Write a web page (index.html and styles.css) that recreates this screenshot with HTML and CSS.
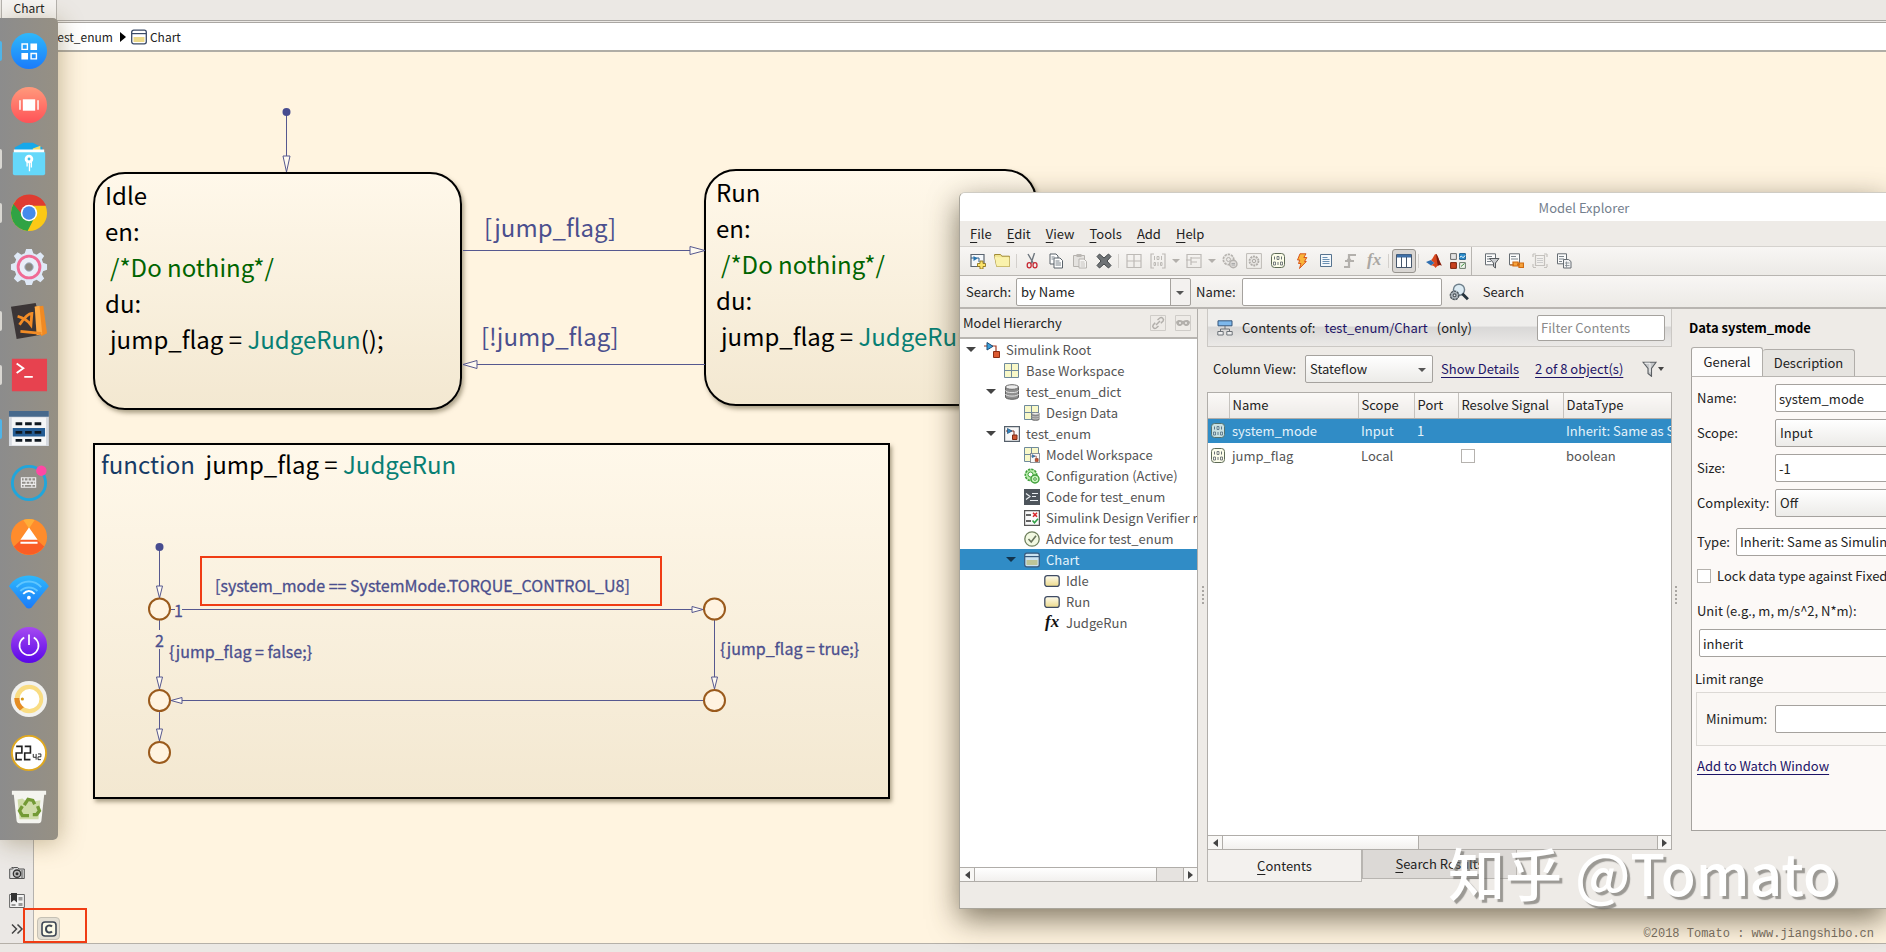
FILE: index.html
```html
<!DOCTYPE html>
<html lang="en">
<head>
  <meta charset="UTF-8" />
  <meta name="viewport" content="width=device-width, initial-scale=1.0" />
  <title>test_enum/Chart</title>
  <link rel="stylesheet" href="styles.css">
</head>
<body>

  <!-- shared icons -->
  <svg class="defs" width="0" height="0" aria-hidden="true">
    <defs>
      <linearGradient id="g-blue" x1="0" y1="0" x2="0" y2="1"><stop offset="0" stop-color="#2fb8fb"/><stop offset="1" stop-color="#1a7bfb"/></linearGradient>
      <linearGradient id="g-coral" x1="0" y1="0" x2="0" y2="1"><stop offset="0" stop-color="#ff9a7c"/><stop offset="1" stop-color="#ff5257"/></linearGradient>
      <linearGradient id="g-purple" x1="0" y1="0" x2="0" y2="1"><stop offset="0" stop-color="#a64af0"/><stop offset="1" stop-color="#5a06e8"/></linearGradient>
      <linearGradient id="g-yellow" x1="0" y1="0" x2="0" y2="1"><stop offset="0" stop-color="#fffdf0"/><stop offset="1" stop-color="#ecd98a"/></linearGradient>
      <symbol id="i-chart" viewBox="0 0 16 16"><rect x=".7" y="1.2" width="14.6" height="13.6" rx="2" fill="#fff" stroke="#3a4a66" stroke-width="1.3"/><path d="M1 4.6h14" stroke="#3a4a66" stroke-width="1.2"/><path d="M2.5 8h11v5h-11z" fill="#ecd98a"/></symbol>
      <symbol id="i-state" viewBox="0 0 16 16"><rect x=".8" y="2.6" width="14.4" height="10.8" rx="2.5" fill="url(#g-yellow)" stroke="#3f4b63" stroke-width="1.3"/></symbol>
      <symbol id="i-fx" viewBox="0 0 16 16"><text x="1" y="12" class="fx">fx</text></symbol>
      <symbol id="i-root" viewBox="0 0 16 16"><path d="M0 4h12v6" fill="none" stroke="#a33a22" stroke-width="1.2"/><path d="M3 .5v7.500l6-3.700z" fill="#3ba0dc" stroke="#1d4c74"/><path d="M9.500 9.500h6v6h-6z" fill="#dc5a31" stroke="#8a2d14"/></symbol>
      <symbol id="i-grid" viewBox="0 0 16 16"><path d="M.5.5h14v14H.5z" fill="#f8f8c8" stroke="#6f8a9c"/><path d="M7.500 1v14M1 7.500h14" stroke="#6f8a9c"/></symbol>
      <symbol id="i-db" viewBox="0 0 16 16"><path d="M1.500 3v10c0 3 13 3 13 0V3z" fill="#8f8f8f" stroke="#5f5f5f"/><ellipse cx="8" cy="3" rx="6.500" ry="2.300" fill="#ececec" stroke="#6a6a6a"/><path d="M1.500 6.500c0 2.800 13 2.800 13 0M1.500 10c0 2.800 13 2.800 13 0" fill="none" stroke="#e2e2e2"/></symbol>
      <symbol id="i-griddb" viewBox="0 0 16 16"><use href="#i-grid"/><svg x="7" y="7" width="9" height="9" viewBox="0 0 16 16"><use href="#i-db"/></svg></symbol>
      <symbol id="i-model" viewBox="0 0 16 16"><path d="M.6.6h14.800v14.800H.6z" fill="#f8f8f8" stroke="#56606b" stroke-width="1.200"/><path d="M2 5h8v4" fill="none" stroke="#803020"/><path d="M3.500 2.500v5l4.500-2.500z" fill="#2f86c4" stroke="#1d4c74" stroke-width=".7"/><path d="M8.500 9h4.500v4.500H8.500z" fill="#cf5530" stroke="#7c2b14"/></symbol>
      <symbol id="i-gridmodel" viewBox="0 0 16 16"><use href="#i-grid"/><svg x="6" y="6" width="10" height="10" viewBox="0 0 16 16"><use href="#i-model"/></svg></symbol>
      <symbol id="i-gears" viewBox="0 0 16 16"><circle cx="7" cy="7" r="5.700" fill="#b9ecaa" stroke="#3f9f3a" stroke-width="1.600" stroke-dasharray="2.400 .9"/><circle cx="6.500" cy="6.500" r="2.500" fill="#fff" stroke="#3f9f3a"/><circle cx="11" cy="11" r="4" fill="#c9f3bd" stroke="#3f9f3a" stroke-width="1.400"/><circle cx="11" cy="11" r="1.300" fill="#fff" stroke="#3f9f3a"/></symbol>
      <symbol id="i-code" viewBox="0 0 16 16"><path d="M0 0h16v16H0z" fill="#4d545b"/><path d="M2 4.500l4 3-4 3M8 4.500h6M8 7.500h4M6 11.500h8" stroke="#e9edf0" stroke-width="1.200" fill="none"/></symbol>
      <symbol id="i-verify" viewBox="0 0 16 16"><path d="M.6.6h14.800v14.800H.6z" fill="#fafafa" stroke="#555" stroke-width="1.200"/><path d="M2 5h5M2 11h5" stroke="#333" stroke-width="1.300"/><path d="M9 2.800l4 4M13 2.800l-4 4" stroke="#d8262b" stroke-width="1.600"/><path d="M8.500 10.500l2 2.300 3.500-4" fill="none" stroke="#2f9f43" stroke-width="1.600"/></symbol>
      <symbol id="i-advice" viewBox="0 0 16 16"><circle cx="8" cy="8" r="7.200" fill="#f2f9e2" stroke="#70805f" stroke-width="1.300"/><path d="M4.500 8l2.700 3L12 4.800" fill="none" stroke="#69745d" stroke-width="1.600"/></symbol>
      <symbol id="i-data" viewBox="0 0 16 16"><rect x="1.500" y=".5" width="13" height="14" rx="3" fill="#fcfdea" stroke="#5d6a55"/><path d="M4.500 3.500v3M11.500 3.500v3M8 9v3" stroke="#596069" stroke-width=".9"/><path d="M7 3.500h2v3H7zM3.500 9h2v3h-2zM10.500 9h2v3h-2z" fill="none" stroke="#596069" stroke-width=".8"/></symbol>
      <symbol id="i-new" viewBox="0 0 16 16"><path d="M1 1.500h13v12H1z" fill="#f5f8fb" stroke="#5b6570" stroke-width="1.200"/><path d="M1 5h8v4" fill="none" stroke="#2c5f8c"/><path d="M3.500 3v5l4-2.500z" fill="#2472ad"/><path d="M10 8h3v2.500h2.500v3H13V16h-3v-2.500H7.500v-3H10z" fill="#fbe36b" stroke="#8f7521" stroke-width=".9"/></symbol>
      <symbol id="i-folder" viewBox="0 0 16 16"><path d="M.6 3.200V1.500h6l1.200 1.700h7.600v10.300H2.700z" fill="#f2e592" stroke="#a18b35"/><path d="M.6 3.200l2.100 10.300h12.700V4.200H3.500z" fill="#faf2ac"/></symbol>
      <symbol id="i-cut" viewBox="0 0 16 16"><path d="M4 1l5.500 9.500M10.500 0L7 10.500" stroke="#6e767e" stroke-width="1.400"/><ellipse cx="5.200" cy="12.300" rx="2" ry="2.600" fill="none" stroke="#c72a34" stroke-width="1.300"/><ellipse cx="11" cy="12.300" rx="2" ry="2.600" fill="none" stroke="#c72a34" stroke-width="1.300"/></symbol>
      <symbol id="i-copy" viewBox="0 0 16 16"><path d="M2 1h6l2 2v8H2z" fill="#fff" stroke="#586169"/><path d="M6 5h6l2.500 2.500V15H6z" fill="#fff" stroke="#586169"/><path d="M3.500 4h3M3.500 6h2M7.500 8h4M7.500 10h5.500M7.500 12h5.500" stroke="#78828a"/></symbol>
      <symbol id="i-paste" viewBox="0 0 16 16"><path d="M1.500 2.500h11v11h-11z" fill="#e4e2df" stroke="#b5b2ae"/><path d="M4.500 1h5v3h-5z" fill="#bab7b3"/><path d="M7 6h5l2.500 2.500V15H7z" fill="#f6f5f3" stroke="#b5b2ae"/><path d="M8.500 9h4M8.500 11h4.500M8.500 13h4.500" stroke="#c4c1bd"/></symbol>
      <symbol id="i-delete" viewBox="0 0 16 16"><path d="M1 3.500L3.500 1 8 5l4.500-4L15 3.500 11 8l4 4.500-2.500 2.500L8 11l-4.500 4L1 12.500 5 8z" fill="#6f7376" stroke="#44484b"/></symbol>
      <symbol id="i-ggrid" viewBox="0 0 16 16"><path d="M1 1.500h14v13H1zM8 1.500v13M1 8h14" fill="none" stroke="#bdbab6" stroke-width="1.200"/></symbol>
      <symbol id="i-gdata" viewBox="0 0 16 16"><path d="M4 1H1v14h3M12 1h3v14h-3" fill="none" stroke="#bdbab6" stroke-width="1.200"/><path d="M4.500 3v4M11.500 3v4M8 9v4M7 3.500h2v3H7zM4 9.500h1.500v3H4zM10.500 9.500H12v3h-1.500z" fill="none" stroke="#bdbab6"/></symbol>
      <symbol id="i-gport" viewBox="0 0 16 16"><path d="M1 1.500h14v13H1zM0 7h5M5 4v8M5 5h9M5 9h6" fill="none" stroke="#bdbab6" stroke-width="1.200"/></symbol>
      <symbol id="i-gcogs" viewBox="0 0 16 16"><circle cx="6.500" cy="6.500" r="5.200" fill="#eae8e5" stroke="#b5b2ae" stroke-width="1.700" stroke-dasharray="2.400 .9"/><circle cx="6.500" cy="6.500" r="2" fill="none" stroke="#b5b2ae"/><circle cx="11.300" cy="11" r="3.700" fill="#dedbd8" stroke="#b5b2ae" stroke-width="1.400"/><path d="M9.500 10.500h3.500M9.500 12h3.500" stroke="#aaa"/></symbol>
      <symbol id="i-gcog" viewBox="0 0 16 16"><path d="M.6.6h14.800v14.800H.6z" fill="none" stroke="#bdbab6"/><circle cx="8" cy="8" r="4.500" fill="#e6e4e1" stroke="#b0ada9" stroke-width="1.800" stroke-dasharray="2 .8"/><circle cx="8" cy="8" r="1.700" fill="none" stroke="#b0ada9"/></symbol>
      <symbol id="i-bolt" viewBox="0 0 16 16"><path d="M6 .8h6L9.800 4.500h3L10.500 8.500h1.800L5.500 15.500l1.500-5H4.500l1.300-3.500H3.500z" fill="#f9b43a" stroke="#d8571c"/></symbol>
      <symbol id="i-doc" viewBox="0 0 16 16"><path d="M2.500 1.500h11v12h-11z" fill="#f4f8fb" stroke="#56738f"/><path d="M4.500 4.500h5M4.500 6.500h7M4.500 8.500h7M4.500 10.500h7" stroke="#6a90b3"/></symbol>
      <symbol id="i-gtrig" viewBox="0 0 16 16"><path d="M2 14h5V2h7M3 8h9" fill="none" stroke="#b3b0ac" stroke-width="2.200"/><path d="M3 9l4-5 4 5z" fill="#b3b0ac"/></symbol>
      <symbol id="i-columns" viewBox="0 0 16 16"><path d="M.5 1.500h15v13H.5z" fill="#fff" stroke="#46566b"/><path d="M1 1.500h14v3H1z" fill="#3f6fa6"/><path d="M5.500 4v11M10.500 4v11" stroke="#46566b"/></symbol>
      <symbol id="i-matlab" viewBox="0 0 16 16"><path d="M0 9l5-2 3.500 3L5 12.500z" fill="#2f6fb0"/><path d="M5 7c2-1 3-6 5-6 1.500 0 3 7 5.800 11.500-2-1-3.500-.5-6.300 2.500C8.500 13 7 12.500 5 12.500L8.500 10z" fill="#d9471d"/><path d="M10 1c1.500 0 3 7 5.800 11.500-2-1-3-.6-4 .1C11 9 10.500 4 10 1z" fill="#7c1d10"/></symbol>
      <symbol id="i-lib" viewBox="0 0 16 16"><path d="M.6.6h5.800v5.800H.6z" fill="#e3e3e3" stroke="#6a6a6a"/><path d="M9.600.6h5.800v5.800H9.600z" fill="#2c8fd0" stroke="#1b5d8c"/><path d="M.6 9.600h5.800v5.800H.6z" fill="#c8411f" stroke="#7d230e"/><path d="M9.600 9.600h5.800v5.800H9.600z" fill="#f0f4ec" stroke="#6a7a6a"/><path d="M10 4.500c1.500-4 2.500 3 5-2" stroke="#fff" fill="none"/><path d="M11 13.500l3.500-3" stroke="#3c8f3c"/></symbol>
      <symbol id="i-rowfilter" viewBox="0 0 16 16"><path d="M1.500.8h10v11h-10z" fill="#fbfbfb" stroke="#666d73"/><path d="M3 3.500h5M3 6h7M3 8.500h4" stroke="#7b848b"/><path d="M5.500 5.500h9.500l-3.500 4.500v5l-2-1.500V10z" fill="#c9cccf" stroke="#55595d"/></symbol>
      <symbol id="i-rowlink" viewBox="0 0 16 16"><path d="M1.500.8h10v11h-10z" fill="#fbfbfb" stroke="#666d73"/><path d="M3 3.500h5M3 6h7" stroke="#7b848b"/><path d="M5 9h5v4H5zM11 10h4.500v4.500H11zM2 12h4M9 11.500h3" fill="#f5a23c" stroke="#d06b12" stroke-width="1.200"/></symbol>
      <symbol id="i-growbox" viewBox="0 0 16 16"><path d="M3.500 2.500h9v10h-9zM1 1h3M12 1h3M1 14.500h3M12 14.500h3M1 1v3M15 1v3M1 11v3M15 11v3" fill="none" stroke="#c4c1bd" stroke-width="1.200"/><path d="M5 5.500h6M5 7.500h6M5 9.500h6" stroke="#ccc"/></symbol>
      <symbol id="i-rowcopy" viewBox="0 0 16 16"><path d="M1.500.8h9v10h-9z" fill="#fbfbfb" stroke="#666d73"/><path d="M3 3.500h5M3 6h5M3 8.500h3" stroke="#7b848b"/><path d="M7.500 6.500h5l2.500 2v6.500H7.500z" fill="#f1f2f3" stroke="#666d73"/><path d="M9 10h4.500M9 12.500h4.500M10.500 8.500v6" stroke="#80888e" stroke-width=".8"/></symbol>
      <symbol id="i-search" viewBox="0 0 18 16"><circle cx="9" cy="6" r="5" fill="#dcebf3" stroke="#6e7f8b" stroke-width="1.300"/><path d="M12 9.500l5 5" stroke="#24323c" stroke-width="2.600"/><circle cx="5" cy="11" r="3.800" fill="#aeb6bc" stroke="#4d565c" stroke-width="1.300" stroke-dasharray="2.200 .6"/><circle cx="5" cy="11" r="1.300" fill="#eee" stroke="#4d565c"/></symbol>
      <symbol id="i-link" viewBox="0 0 16 16"><path d="M.5.5h15v15H.5z" fill="none" stroke="#cfccc8"/><path d="M6 10l4-4M7.500 5l2.300-2c2-1.500 4.700 1 3.300 3L10.800 8.300M5.200 7.700L3.200 10c-1.400 2 1 4.500 3 3l2.300-2" fill="none" stroke="#b2afab" stroke-width="1.500"/></symbol>
      <symbol id="i-mask" viewBox="0 0 16 16"><path d="M.5.5h15v15H.5z" fill="none" stroke="#cfccc8"/><path d="M1 7c2-3 4.500-2 7-1 2.500-1 5-2 7 1-.5 5-5 5-7 2C6 12 1.500 12 1 7z" fill="#b2afab"/><circle cx="5" cy="8" r="1" fill="#efedea"/><circle cx="11" cy="8" r="1" fill="#efedea"/></symbol>
      <symbol id="i-hier" viewBox="0 0 16 16"><path d="M1 .8h14v5H1z" fill="#7db8ec" stroke="#35557a"/><path d="M8 6v3M3.500 11.500V9h9v2.500" fill="none" stroke="#6d7278"/><path d="M.8 11.500h5.400v3.500H.8zM9.800 11.500h5.400v3.500H9.800z" fill="#eee" stroke="#6d7278"/></symbol>
      <symbol id="i-funnel" viewBox="0 0 16 16"><path d="M1 1.200h13L9.500 7.500v7.800L6 12.500v-5z" fill="#c6c8ca" stroke="#5b5f63" stroke-width="1.100"/><path d="M2.500 2.200h5.500v9" fill="none" stroke="#f4f4f4"/></symbol>
    </defs>
  </svg>

  <main class="editor">
    <div class="tab-bar"><div class="file-tab">Chart</div></div>
    <nav class="breadcrumb">
      <span>test_enum</span>
      <i class="crumb-arrow"></i>
      <svg class="icon"><use href="#i-chart"/></svg>
      <span>Chart</span>
    </nav>
    <div class="workspace">
      <aside class="palette">
        <button aria-label="Screenshot"><svg class="icon" viewBox="0 0 16 16"><path d="M.7 4h3l1-1.500h4L10 4h5.300v9.500H.7z" fill="#d8d8d8" stroke="#555"/><circle cx="8" cy="8.700" r="3.700" fill="#bbb" stroke="#333" stroke-width="1.300"/><circle cx="8" cy="8.700" r="1.500" fill="#333"/><path d="M13 5v8M2.500 2.500h2" stroke="#555"/></svg></button>
        <button aria-label="Bookmarks"><svg class="icon" viewBox="0 0 16 16"><path d="M.6 1.500h14.800v13H.6z" fill="#f3f3f3" stroke="#666"/><path d="M2 0h6v9.500L5 7l-3 2.500z" fill="#333"/><path d="M9.500 4h4v3.500h-4zM9.500 10h4v3h-4zM2.500 11h4v2h-4z" fill="#999"/></svg></button>
        <button aria-label="More"><svg class="icon" viewBox="0 0 16 16"><path d="M3 3.500L7.500 8 3 12.500M8.500 3.500L13 8l-4.500 4.500" fill="none" stroke="#444" stroke-width="1.500"/></svg></button>
      </aside>

      <section class="canvas">
        <div class="state idle">
          <div>Idle</div>
          <div>en:</div>
          <div class="action comment">/*Do nothing*/</div>
          <div>du:</div>
          <div class="action">jump_flag = <span class="call">JudgeRun</span>();</div>
        </div>
        <div class="state run">
          <div>Run</div>
          <div>en:</div>
          <div class="action comment">/*Do nothing*/</div>
          <div>du:</div>
          <div class="action">jump_flag = <span class="call">JudgeRun</span>();</div>
        </div>
        <div class="function-box"><span class="keyword">function</span>&nbsp; jump_flag = <span class="call">JudgeRun</span></div>

        <!-- transitions and junctions -->
        <svg class="wires" viewBox="0 0 960 890" width="960" height="890">
          <g class="wire">
            <path d="M252.500 60v60M429 198.500h241M429 312.500h242"/>
            <path d="M125.500 495v51M125.500 568v10M125.500 597v41M125.500 660v30M137 557.500h4M148 557.500h522M680.500 567v71M670 648.500H137"/>
          </g>
          <g class="head">
            <path d="M249 104h7l-3.500 16zM656 194.500v8l15-4zM443 308.500v8l-14-4z"/>
            <path d="M122.500 534h6l-3 12zM122.500 625h6l-3 12zM122.500 677h6l-3 12zM677.500 625h6l-3 12zM658 554.500v6l11-3zM148 645.500v6l-11-3z"/>
          </g>
          <circle class="dot" cx="252.500" cy="60" r="4"/>
          <circle class="dot" cx="125.500" cy="495" r="4"/>
          <g class="junction">
            <circle cx="125.500" cy="557" r="10.500"/>
            <circle cx="125.500" cy="648.500" r="10.500"/>
            <circle cx="125.500" cy="700.500" r="10.500"/>
            <circle cx="680.500" cy="557" r="10.500"/>
            <circle cx="680.500" cy="648.500" r="10.500"/>
          </g>
          <g class="label big">
            <text x="450" y="185">[jump_flag]</text>
            <text x="447" y="294">[!jump_flag]</text>
          </g>
          <g class="label">
            <text x="181" y="540">[system_mode == SystemMode.TORQUE_CONTROL_U8]</text>
            <text x="140" y="565">1</text>
            <text x="121" y="595">2</text>
            <text x="135" y="606">{jump_flag = false;}</text>
            <text x="686" y="603">{jump_flag = true;}</text>
          </g>
        </svg>
        <div class="marker condition-marker"></div>
        <button class="lang-badge" aria-label="C action language"><svg class="icon" viewBox="0 0 16 16"><rect x="1" y="1" width="14" height="14" rx="3" fill="#fdfbe8" stroke="#3d4654" stroke-width="1.600"/><path d="M11 5.500C9 3.500 5 4.300 5 8s4 4.500 6 2.500" fill="none" stroke="#3d4654" stroke-width="2"/></svg></button>
        <div class="marker badge-marker"></div>
        <div class="copyright">©2018 Tomato : www.jiangshibo.cn</div>
      </section>
    </div>
    <footer class="status-bar"></footer>
  </main>

  <nav class="dock">
    <a href="#" class="active-blue" aria-label="Launcher"><svg viewBox="0 0 40 40"><circle cx="20" cy="20" r="19" fill="url(#g-blue)"/><path d="M21.500 12h7v7h-7zM12 22h7v7h-7z" fill="#fff"/><path d="M12.700 12.700h5.600v5.600h-5.600zM22.200 22.700h5.600v5.600h-5.600z" fill="none" stroke="#fff" stroke-width="1.500"/></svg></a>
    <a href="#" aria-label="Multitasking"><svg viewBox="0 0 40 40"><circle cx="20" cy="20" r="19" fill="url(#g-coral)"/><path d="M13.500 14h13v12h-13z" fill="#fff"/><path d="M10.500 15v10M29.500 15v10" stroke="#fff" stroke-width="1.500"/></svg></a>
    <a href="#" class="running" aria-label="Files"><svg viewBox="0 0 40 40"><path d="M5 8l9-5h10l10 5v6H5z" fill="#16a8ea"/><path d="M24 9l8-3v7h-8z" fill="#f6dc6a"/><path d="M4 10h32v6H4z" fill="#fdfefe"/><path d="M3 13h34v22a2 2 0 0 1-2 2H5a2 2 0 0 1-2-2z" fill="#65d8fa"/><circle cx="20" cy="20" r="4.500" fill="#fff"/><circle cx="20" cy="20" r="1.500" fill="#43bfe8"/><path d="M18 23v5M20.500 24v9M22.500 23v6" stroke="#fff" stroke-width="1.400"/></svg></a>
    <a href="#" class="running" aria-label="Chrome"><svg viewBox="0 0 40 40"><circle cx="20" cy="20" r="19" fill="#fbc916"/><path d="M20 20L3.600 10.500A19 19 0 0 0 18.500 39l8-15.500z" fill="#30a344"/><path d="M20 20L6 7.200A19 19 0 0 1 38 12H20z" fill="#df3c31"/><path d="M3.600 10.500A19 19 0 0 1 37.300 12H20a8.500 8.500 0 0 0-8.500 8z" fill="#df3c31"/><circle cx="20" cy="20" r="8.700" fill="#fff"/><circle cx="20" cy="20" r="7" fill="#448bec"/></svg></a>
    <a href="#" aria-label="Control Center"><svg viewBox="0 0 40 40"><path d="M17 1h6l1.500 4.500L28 7l4-2.500 4 4L33.500 12l1.300 3.500L39 17v6l-4.200 1.500L33.500 28l2.500 4-4 4-4-2.500-3.500 1.500L23 39h-6l-1.500-4.500L12 33.500 8 36l-4-4 2.500-4-1.300-3.500L1 23v-6l4.200-1.500L6.500 12 4 8.500l4-4L12 7l3.500-1.500z" fill="#dfe9f7"/><circle cx="20" cy="20" r="11.500" fill="#e9eef9" stroke="#f06b96" stroke-width="3"/><circle cx="20" cy="20" r="4.500" fill="#8b8882" stroke="#a9b8cc" stroke-width="1"/></svg></a>
    <a href="#" class="running" aria-label="Sublime Text"><svg viewBox="0 0 40 40"><path d="M1 5l26-4 9 33-29 5z" fill="#3b3536"/><path d="M26 5l9-1 4 29-6 3z" fill="#f08a24"/><path d="M26 5l5-1 3 30-6 1z" fill="#ffab47"/><path d="M8 15c7 2 11 5 14 9l1-12c-4 0-9 6-13 12M11 31l22 2" fill="none" stroke="#f28c26" stroke-width="3"/></svg></a>
    <a href="#" class="running" aria-label="Terminal"><svg viewBox="0 0 40 40"><path d="M2 3h37v34H2z" fill="#e7424f"/><path d="M7 8l7 5-7 5M15 22h9" fill="none" stroke="#fff" stroke-width="2"/></svg></a>
    <a href="#" class="active-blue" aria-label="Keyboard viewer"><svg viewBox="0 0 44 40"><path d="M1 1h42v37H1z" fill="#d6dae0"/><path d="M1 1h42v6H1z" fill="#47698c"/><path d="M4 8h36v29H4z" fill="#f5f6f7"/><path d="M5 19h34v9H5z" fill="#245c94"/><path d="M8 14.500h28M8 23.500h28M8 32h28" stroke="#101820" stroke-width="3" stroke-dasharray="7 3"/></svg></a>
    <a href="#" aria-label="Input method"><svg viewBox="0 0 40 40"><circle cx="20" cy="20" r="17.500" fill="none" stroke="#20a6dc" stroke-width="3"/><path d="M12 14.500h15v10H12zM12 18h15M12 21.500h15M15 14.500v3.500M19 14.500v3.500M23 14.500v3.500M17 18v3.500M21 18v3.500M25 18v3.500M15 21.500v3M23 21.500v3" fill="none" stroke="#eee" stroke-width="1.200"/><circle cx="33" cy="7" r="5.500" fill="#ff48a4"/></svg></a>
    <a href="#" aria-label="Eject"><svg viewBox="0 0 40 40"><circle cx="20" cy="20" r="19" fill="#ff8c2c"/><path d="M4 30a19 19 0 0 0 32 0L25 20H15z" fill="#fa5d25"/><path d="M14 2l6 9 6-9a19 19 0 0 0-12 0z" fill="#ffae38"/><path d="M20 10l9 13H11zM11 25h18v2H11z" fill="#fff"/></svg></a>
    <a href="#" aria-label="Network"><svg viewBox="0 0 44 40"><path d="M1 15C10 0 34 0 43 15L25 37c-2 2-4 2-6 0z" fill="url(#g-blue)"/><path d="M9 16c7-8 19-8 26 0M13 20c5-5 13-5 18 0" fill="none" stroke="#5fc6ff" stroke-width="2"/><path d="M16 23c4-4 8-4 12 0" fill="none" stroke="#fff" stroke-width="2"/><circle cx="22" cy="27" r="2" fill="#fff"/></svg></a>
    <a href="#" aria-label="Power"><svg viewBox="0 0 40 40"><circle cx="20" cy="20" r="19" fill="url(#g-purple)"/><path d="M15 12a10 10 0 1 0 10 0M20 9v11" fill="none" stroke="#fff" stroke-width="1.800"/></svg></a>
    <a href="#" aria-label="Disk"><svg viewBox="0 0 40 40"><circle cx="20" cy="20" r="19" fill="#f1f1ef"/><circle cx="20" cy="20" r="15" fill="#f9dc82"/><path d="M4.500 19h8l3 9-5 4c-4-3-6-8-6-13z" fill="#e48c22"/><circle cx="20.500" cy="20" r="10.500" fill="#fff"/><circle cx="13" cy="20" r="1.700" fill="#d59a1a"/></svg></a>
    <a href="#" aria-label="Clock"><svg viewBox="0 0 40 40"><circle cx="20" cy="20" r="18" fill="#fff" stroke="#e0a81e" stroke-width="2"/><path d="M6.500 13h6v7h-6v7h6M15.500 13h6v7h-6v7h6" fill="none" stroke="#222" stroke-width="1.700"/><path d="M24.500 21v3.500h3M27.500 21v6M29.500 21h3v3h-3v3h3" fill="none" stroke="#222" stroke-width="1"/></svg></a>
    <a href="#" aria-label="Trash"><svg viewBox="0 0 40 40"><path d="M2 3h36v4h-2l-3 28a3 3 0 0 1-3 2H10a3 3 0 0 1-3-2L4 7H2z" fill="#f4f4ef"/><path d="M8 12l5-1 4 3 5-2 4 2 6-1-2 20H10z" fill="#cfdca8"/><path d="M15 18l4-6 5 1 2 4M29 19l2 5-3 4h-4M20 29h-7l-3-5 3-5" fill="none" stroke="#739a35" stroke-width="3.500"/></svg></a>
  </nav>

  <section class="explorer">
    <header class="title-bar">Model Explorer</header>
    <nav class="menu-bar">
      <a href="#"><u>F</u>ile</a><a href="#"><u>E</u>dit</a><a href="#"><u>V</u>iew</a><a href="#"><u>T</u>ools</a><a href="#"><u>A</u>dd</a><a href="#"><u>H</u>elp</a>
    </nav>
    <div class="tool-bar">
      <button aria-label="New model"><svg class="icon"><use href="#i-new"/></svg></button>
      <button aria-label="Open"><svg class="icon"><use href="#i-folder"/></svg></button>
      <i class="sep"></i>
      <button aria-label="Cut"><svg class="icon"><use href="#i-cut"/></svg></button>
      <button aria-label="Copy"><svg class="icon"><use href="#i-copy"/></svg></button>
      <button aria-label="Paste"><svg class="icon"><use href="#i-paste"/></svg></button>
      <button aria-label="Delete"><svg class="icon"><use href="#i-delete"/></svg></button>
      <i class="sep"></i>
      <button aria-label="Add workspace"><svg class="icon"><use href="#i-ggrid"/></svg></button>
      <button aria-label="Add variable"><svg class="icon"><use href="#i-gdata"/></svg></button>
      <i class="drop"></i>
      <button aria-label="Add port"><svg class="icon"><use href="#i-gport"/></svg></button>
      <i class="drop"></i>
      <button aria-label="Add configuration"><svg class="icon"><use href="#i-gcogs"/></svg></button>
      <button aria-label="Add configuration reference"><svg class="icon"><use href="#i-gcog"/></svg></button>
      <button aria-label="Add data"><svg class="icon"><use href="#i-data"/></svg></button>
      <button aria-label="Add event"><svg class="icon"><use href="#i-bolt"/></svg></button>
      <button aria-label="Add message"><svg class="icon"><use href="#i-doc"/></svg></button>
      <button aria-label="Add trigger"><svg class="icon"><use href="#i-gtrig"/></svg></button>
      <button aria-label="Add function" class="dim"><svg class="icon"><use href="#i-fx"/></svg></button>
      <i class="sep"></i>
      <button aria-label="Column view" class="pressed"><svg class="icon"><use href="#i-columns"/></svg></button>
      <i class="sep"></i>
      <button aria-label="MATLAB"><svg class="icon"><use href="#i-matlab"/></svg></button>
      <button aria-label="Library browser"><svg class="icon"><use href="#i-lib"/></svg></button>
      <i class="bar-end"></i>
      <button aria-label="Filter rows"><svg class="icon"><use href="#i-rowfilter"/></svg></button>
      <button aria-label="Linked rows"><svg class="icon"><use href="#i-rowlink"/></svg></button>
      <button aria-label="Select rows"><svg class="icon"><use href="#i-growbox"/></svg></button>
      <button aria-label="Copy rows"><svg class="icon"><use href="#i-rowcopy"/></svg></button>
    </div>
    <div class="search-bar">
      <label for="search-by">Search:</label>
      <div class="select split search-by"><select id="search-by"><option>by Name</option></select></div>
      <label for="search-name">Name:</label>
      <input id="search-name" class="field search-name" type="text">
      <button class="search-button"><svg class="search-icon"><use href="#i-search"/></svg>Search</button>
    </div>

    <div class="panes">
      <section class="hierarchy">
        <header class="pane-title">Model Hierarchy
          <span class="title-tools"><svg class="icon"><use href="#i-link"/></svg><svg class="icon"><use href="#i-mask"/></svg></span>
        </header>
        <ul class="tree">
          <li class="l0"><i class="open"></i><svg class="icon"><use href="#i-root"/></svg>Simulink Root</li>
          <li class="l1"><i></i><svg class="icon"><use href="#i-grid"/></svg>Base Workspace</li>
          <li class="l1"><i class="open"></i><svg class="icon"><use href="#i-db"/></svg>test_enum_dict</li>
          <li class="l2"><i></i><svg class="icon"><use href="#i-griddb"/></svg>Design Data</li>
          <li class="l1"><i class="open"></i><svg class="icon"><use href="#i-model"/></svg>test_enum</li>
          <li class="l2"><i></i><svg class="icon"><use href="#i-gridmodel"/></svg>Model Workspace</li>
          <li class="l2"><i></i><svg class="icon"><use href="#i-gears"/></svg>Configuration (Active)</li>
          <li class="l2"><i></i><svg class="icon"><use href="#i-code"/></svg>Code for test_enum</li>
          <li class="l2"><i></i><svg class="icon"><use href="#i-verify"/></svg>Simulink Design Verifier results</li>
          <li class="l2"><i></i><svg class="icon"><use href="#i-advice"/></svg>Advice for test_enum</li>
          <li class="l2 selected"><i class="open"></i><svg class="icon"><use href="#i-chart"/></svg>Chart</li>
          <li class="l3"><i></i><svg class="icon"><use href="#i-state"/></svg>Idle</li>
          <li class="l3"><i></i><svg class="icon"><use href="#i-state"/></svg>Run</li>
          <li class="l3"><i></i><svg class="icon dark"><use href="#i-fx"/></svg>JudgeRun</li>
        </ul>
        <div class="scroll tree-scroll"><i class="left"></i><b></b><i class="right"></i></div>
      </section>

      <div class="splitter"><i></i></div>

      <section class="contents">
        <header class="contents-bar">
          <svg class="icon"><use href="#i-hier"/></svg>
          <span>Contents of:</span>
          <span class="path">test_enum/Chart</span>
          <span>(only)</span>
          <input class="field" type="text" placeholder="Filter Contents" aria-label="Filter Contents">
        </header>
        <div class="view-bar">
          <label for="column-view">Column View:</label>
          <div class="select column-view"><select id="column-view"><option>Stateflow</option></select></div>
          <a href="#">Show Details</a>
          <a href="#">2 of 8 object(s)</a>
          <button class="funnel" aria-label="Filter"><svg class="icon"><use href="#i-funnel"/></svg><i class="drop"></i></button>
        </div>
        <div class="table-wrap">
          <table>
            <colgroup><col class="c-icon"><col class="c-name"><col class="c-scope"><col class="c-port"><col class="c-resolve"><col></colgroup>
            <thead>
              <tr><th></th><th>Name</th><th>Scope</th><th>Port</th><th>Resolve Signal</th><th>DataType</th></tr>
            </thead>
            <tbody>
              <tr class="selected"><td class="c-icon"><svg class="icon"><use href="#i-data"/></svg></td><td>system_mode</td><td>Input</td><td>1</td><td></td><td>Inherit: Same as Simulink</td></tr>
              <tr><td class="c-icon"><svg class="icon"><use href="#i-data"/></svg></td><td>jump_flag</td><td>Local</td><td></td><td><input type="checkbox" aria-label="Resolve signal"></td><td>boolean</td></tr>
            </tbody>
          </table>
        </div>
        <div class="scroll table-scroll"><i class="left"></i><b></b><i class="right"></i></div>
        <div class="bottom-tabs">
          <button class="current"><u>C</u>ontents</button>
          <button><u>S</u>earch Results</button>
        </div>
      </section>

      <div class="splitter wide"><i></i></div>

      <section class="details">
        <h1>Data system_mode</h1>
        <div class="tabs"><button class="current">General</button><button>Description</button></div>
        <form class="tab-page">
          <div class="row"><label for="d-name">Name:</label><input id="d-name" class="field" type="text" value="system_mode"></div>
          <div class="row"><label for="d-scope">Scope:</label><div class="select"><select id="d-scope"><option>Input</option></select></div></div>
          <div class="row"><label for="d-size">Size:</label><input id="d-size" class="field" type="text" value="-1"></div>
          <div class="row"><label for="d-complex">Complexity:</label><div class="select"><select id="d-complex"><option>Off</option></select></div></div>
          <div class="row type-row"><label for="d-type">Type:</label><div class="select split"><select id="d-type"><option>Inherit: Same as Simulink</option></select></div></div>
          <div class="row lock-row"><input id="d-lock" type="checkbox"><label for="d-lock">Lock data type against Fixed-Point tools</label></div>
          <div class="unit-row"><label for="d-unit">Unit (e.g., m, m/s^2, N*m):</label><input id="d-unit" class="field" type="text" value="inherit"></div>
          <div class="range-title">Limit range</div>
          <div class="range-box"><label for="d-min">Minimum:</label><input id="d-min" class="field" type="text"></div>
          <a class="watch" href="#">Add to Watch Window</a>
        </form>
      </section>
    </div>
  </section>

  <div class="watermark">知乎 @Tomato</div>

</body>
</html>
```

FILE: styles.css
```css
* {
  box-sizing: border-box;
}
body {
  margin: 0;
  height: 100vh;
  position: relative;
  overflow: hidden;
  font-family: "Noto Sans CJK SC", "Noto Sans", sans-serif;
  font-size: 13px;
  line-height: 20px;
  color: #222;
  background: #ebe8e4;
}
button, input, select {
  font: inherit;
  color: inherit;
  margin: 0;
}
button {
  border: none;
  background: none;
  padding: 0;
}
.defs {
  position: absolute;
}
.icon {
  width: 16px;
  height: 16px;
  flex: none;
  display: block;
}
.dark {
  color: #111;
}
.fx {
  font: italic bold 17px "Liberation Serif", serif;
  fill: currentColor;
}

/* editor */
.editor {
  height: 100%;
  display: flex;
  flex-direction: column;
}
.tab-bar {
  height: 21px;
  flex: none;
  border-bottom: 1px solid #aaa7a3;
  padding-left: 1px;
  display: flex;
}
.file-tab {
  width: 56px;
  line-height: 15px;
  font-size: 12px;
  text-align: center;
  background: #f6f4f2;
  border: 1px solid #b5b2ae;
  border-top: none;
}
.breadcrumb {
  flex: none;
  height: 30px;
  margin-top: 1px;
  padding-left: 53px;
  display: flex;
  align-items: center;
  gap: 3px;
  font-size: 12px;
  background: #fff;
  border-top: 1px solid #aaa7a3;
  border-bottom: 2px solid #b0ada6;
}
.crumb-arrow {
  margin: 0 2px 0 4px;
  border: 5px solid transparent;
  border-left: 6px solid #000;
  border-right: none;
}
.workspace {
  flex: 1;
  display: flex;
  min-height: 0;
}
.palette {
  width: 34px;
  flex: none;
  border-right: 1px solid #b5b2ae;
  background: #ebe8e5;
  display: flex;
  flex-direction: column;
  justify-content: flex-end;
  align-items: center;
  gap: 12px;
  padding-bottom: 6px;
}
.canvas {
  flex: 1;
  position: relative;
  background: #fff4e0;
}
.status-bar {
  height: 9px;
  flex: none;
  border-top: 1px solid #b5b0a8;
}
.state, .function-box {
  position: absolute;
  border: 2px solid #000;
  background: linear-gradient(#fff8ea, #f3e8d1);
  box-shadow: 2px 3px 4px rgba(90, 80, 50, 0.5);
  font-size: 24px;
  line-height: 36px;
  color: #000;
  white-space: nowrap;
}
.state {
  border-radius: 32px;
  padding: 3px 10px;
}
.idle {
  left: 59px;
  top: 120px;
  width: 369px;
  height: 238px;
}
.run {
  left: 670px;
  top: 117px;
  width: 333px;
  height: 237px;
}
.action {
  padding-left: 5px;
}
.comment {
  color: #006400;
}
.call {
  color: #087f74;
}
.keyword {
  color: #173b66;
}
.function-box {
  left: 59px;
  top: 391px;
  width: 797px;
  height: 356px;
  padding: 1px 6px;
}
.wires {
  position: absolute;
  left: 0;
  top: 0;
}
.wire {
  stroke: #56588f;
  fill: none;
}
.head {
  stroke: #56588f;
  fill: #fffaf0;
}
.dot {
  fill: #474c90;
}
.junction {
  fill: #fff3e0;
  stroke: #9a5a1c;
  stroke-width: 2;
}
.label {
  font-size: 16px;
  fill: #4b4f8e;
  stroke: #4b4f8e;
  stroke-width: 0.3;
}
.big {
  font-size: 24px;
  stroke: none;
}
.marker {
  position: absolute;
  border: 2px solid #f03c14;
}
.condition-marker {
  left: 166px;
  top: 504px;
  width: 462px;
  height: 50px;
}
.badge-marker {
  left: -11px;
  bottom: 0;
  width: 64px;
  height: 35px;
}
.lang-badge {
  position: absolute;
  left: 3px;
  bottom: 3px;
  width: 23px;
  height: 23px;
  border: 1px solid #c5c0b4;
  border-radius: 4px;
  background: #e4dfd3;
  display: grid;
  place-items: center;
}
.copyright {
  position: absolute;
  right: 12px;
  bottom: 0;
  font-family: "Liberation Mono", monospace;
  font-size: 12px;
  line-height: 18px;
  color: #746a5b;
  z-index: 3;
}

/* dock */
.dock {
  position: absolute;
  left: 0;
  top: 18px;
  width: 58px;
  padding: 6px 0;
  border-radius: 0 5px 5px 0;
  background: linear-gradient(90deg, #8c8c8c, #969084);
  box-shadow: 2px 3px 24px rgba(110, 90, 40, 0.4);
}
.dock a {
  height: 54px;
  display: grid;
  place-items: center;
  position: relative;
}
.dock svg {
  height: 38px;
}
.running::before, .active-blue::before {
  content: "";
  position: absolute;
  left: 0;
  width: 2px;
  height: 20px;
  border-radius: 0 2px 2px 0;
  background: #d9d7d2;
}
.active-blue::before {
  background: #4fb4e8;
}

/* model explorer */
.explorer {
  position: absolute;
  left: 959px;
  right: 0;
  top: 192px;
  bottom: 43px;
  display: flex;
  flex-direction: column;
  background: #eeebe7;
  border: 1px solid #a9a59b;
  border-top-color: #cfccc4;
  border-right: none;
  border-radius: 6px 0 0 0;
  box-shadow: 0 10px 30px rgba(60, 50, 30, 0.65);
}
.title-bar {
  height: 28px;
  line-height: 29px;
  flex: none;
  text-align: center;
  padding-left: 322px;
  color: #74808e;
  background: #fff;
  border-radius: 5px 0 0 0;
}
.menu-bar {
  height: 25px;
  flex: none;
  display: flex;
  align-items: center;
  gap: 15px;
  padding-left: 10px;
}
.menu-bar a {
  color: #222;
  text-decoration: none;
}
u {
  text-underline-offset: 3px;
}
.tool-bar {
  height: 30px;
  flex: none;
  display: flex;
  align-items: center;
  padding-left: 6px;
  border-top: 1px solid #d5d2ce;
  border-bottom: 1px solid #b8b5b1;
  background: linear-gradient(#f8f6f4, #eceae6);
}
.tool-bar button {
  width: 24px;
  height: 24px;
  flex: none;
  display: grid;
  place-items: center;
}
.tool-bar .pressed {
  border: 1px solid #97948f;
  border-radius: 3px;
  background: #d9d6d3;
}
.tool-bar .dim {
  color: #aaa7a3;
}
.sep {
  width: 1px;
  height: 14px;
  margin: 0 3px 0 2px;
  background: #d3d0cc;
}
.bar-end {
  width: 1px;
  align-self: stretch;
  margin: 0 8px 0 1px;
  background: #b8b5b1;
}
.drop {
  margin: 0 2px;
  border: 4px solid transparent;
  border-top: 4px solid #b3b0ac;
  border-bottom: none;
}
.search-bar {
  height: 33px;
  flex: none;
  display: flex;
  align-items: center;
  padding-left: 6px;
  border-bottom: 2px solid #b8b5b1;
  background: linear-gradient(#f8f6f4, #eceae6);
}
.field, .select {
  height: 28px;
  border: 1px solid #a5a29e;
  border-radius: 2px;
  background: #fff;
}
.field {
  padding: 0 3px;
  min-width: 0;
}
.field::placeholder {
  color: #8a8a8a;
}
.select {
  position: relative;
  background: linear-gradient(#fff, #ecebe8);
}
.select select {
  appearance: none;
  width: 100%;
  height: 100%;
  border: none;
  background: none;
  padding: 0 4px;
  display: block;
}
.select::after {
  content: "";
  position: absolute;
  right: 6px;
  top: 12px;
  border: 4px solid transparent;
  border-top: 4px solid #555;
  border-bottom: none;
}
.split {
  background: linear-gradient(90deg, #fff calc(100% - 20px), #a5a29e calc(100% - 20px) calc(100% - 19px), #f3f1ef calc(100% - 19px));
}
.search-by {
  width: 175px;
  margin: 0 5px;
}
.search-name {
  width: 200px;
  margin: 0 7px 0 6px;
}
.search-button {
  display: flex;
  align-items: center;
  gap: 14px;
}
.search-icon {
  width: 20px;
  height: 18px;
}
.panes {
  flex: 1;
  min-height: 0;
  display: grid;
  grid-template-columns: 238px 9px 465px 17px minmax(0, 1fr);
  padding-bottom: 26px;
}
.hierarchy {
  display: flex;
  flex-direction: column;
  min-width: 0;
  min-height: 0;
  background: #fff;
  border-right: 1px solid #b0ada9;
}
.pane-title {
  height: 30px;
  flex: none;
  display: flex;
  align-items: center;
  justify-content: space-between;
  padding: 0 6px 0 3px;
  background: #eeebe7;
  border-bottom: 2px solid #b8b5b1;
}
.title-tools {
  display: flex;
  gap: 9px;
}
.tree {
  list-style: none;
  margin: 0;
  padding: 0;
  flex: 1;
  overflow: hidden;
  color: #555;
}
.tree li {
  height: 21px;
  display: flex;
  align-items: center;
  white-space: nowrap;
}
.tree .icon {
  margin: 0 6px 0 8px;
}
.tree i {
  width: 10px;
  flex: none;
}
.tree .open {
  border: 5px solid transparent;
  border-top: 5px solid #444;
  border-bottom: none;
}
.l0 { padding-left: 6px; }
.l1 { padding-left: 26px; }
.l2 { padding-left: 46px; }
.l3 { padding-left: 66px; }
.tree .selected, tbody .selected {
  background: #308cc6;
  color: #e4f3fb;
}
.selected .icon {
  opacity: 0.75;
}
.tree .selected .open {
  border-top-color: #12344d;
}
.scroll {
  height: 15px;
  flex: none;
  display: flex;
  align-items: center;
  justify-content: space-between;
  background: #e6e3e0;
  border: 1px solid #b0ada9;
}
.scroll i {
  width: 14px;
  height: 13px;
  display: grid;
  place-items: center;
  background: #f8f7f5;
}
.scroll i::before {
  content: "";
  border: 4px solid transparent;
}
.scroll .left::before {
  border-right: 5px solid #444;
  border-left: none;
}
.scroll .right::before {
  border-left: 5px solid #444;
  border-right: none;
}
.scroll b {
  height: 13px;
  margin-right: auto;
  background: linear-gradient(#fff, #f2f0ee);
  border: 1px solid #b0ada9;
  border-width: 0 1px;
}
.tree-scroll {
  border-left: none;
  border-right: none;
}
.tree-scroll b {
  width: 183px;
}
.table-scroll b {
  width: 197px;
}
.scroll .right {
  border-left: 1px solid #b0ada9;
}
.splitter {
  display: grid;
  place-items: center;
}
.splitter i {
  width: 2px;
  height: 20px;
  background: repeating-linear-gradient(#a9a6a2 0 2px, transparent 2px 4px);
}
.wide {
  justify-items: start;
  padding-left: 3px;
}
.contents {
  display: flex;
  flex-direction: column;
  min-width: 0;
  min-height: 0;
}
.contents-bar {
  height: 38px;
  flex: none;
  display: flex;
  align-items: center;
  gap: 9px;
  padding: 0 6px 0 9px;
  border: 1px solid #cbc8c4;
  border-top: none;
  background: linear-gradient(#efeeec 0 45%, #d9d8d7 50%, #ebe9e7);
}
.path {
  color: #1d1466;
}
.contents-bar .field {
  width: 128px;
  height: 26px;
  margin-left: auto;
}
.view-bar {
  height: 45px;
  flex: none;
  display: flex;
  align-items: center;
  padding: 0 8px 2px 6px;
  white-space: nowrap;
}
.column-view {
  width: 128px;
  margin: 0 8px 0 9px;
}
.view-bar a {
  margin-right: 16px;
}
.view-bar a, .watch {
  color: #1d1466;
  text-underline-offset: 3px;
}
.funnel {
  display: flex;
  align-items: center;
  margin-left: auto;
}
.funnel .drop {
  margin: 0;
  border-width: 4px 3px 0;
  border-top-color: #444;
}
.table-wrap {
  flex: 1;
  min-height: 0;
  overflow: hidden;
  background: #fff;
  border: 1px solid #b0ada9;
  border-bottom: none;
}
table {
  width: 560px;
  table-layout: fixed;
  border-collapse: collapse;
}
col.c-icon { width: 21px; }
.c-name { width: 129px; }
.c-scope { width: 56px; }
.c-port { width: 44px; }
.c-resolve { width: 105px; }
th {
  height: 25px;
  padding: 0 3px;
  text-align: left;
  font-weight: 400;
  background: linear-gradient(#fbf9f7, #edeae7);
  border-right: 1px solid #c5c2be;
  border-bottom: 1px solid #b0ada9;
}
td {
  height: 25px;
  padding: 0 3px;
  white-space: nowrap;
}
tbody {
  color: #555;
}
td.c-icon {
  padding: 0 2px;
}
input[type="checkbox"] {
  appearance: none;
  width: 14px;
  height: 14px;
  flex: none;
  border: 1px solid #b5b2ae;
  background: #fff;
  display: block;
}
.bottom-tabs {
  flex: none;
  display: flex;
  align-items: flex-start;
  height: 32px;
}
.bottom-tabs button {
  width: 155px;
  height: 29px;
  background: #dcd9d6;
  border: 1px solid #b8b5b1;
  border-top: none;
}
.bottom-tabs .current {
  height: 32px;
  background: #f3f1ee;
}
.details {
  min-width: 0;
  overflow: hidden;
  display: flex;
  flex-direction: column;
  padding-bottom: 51px;
}
h1 {
  margin: 0;
  padding-top: 9px;
  height: 38px;
  flex: none;
  font-size: 13px;
  line-height: 20px;
  color: #000;
}
.tabs {
  display: flex;
  align-items: flex-end;
  padding-left: 2px;
  height: 29px;
  flex: none;
}
.tabs button {
  width: 92px;
  height: 27px;
  background: #e6e4e0;
  border: 1px solid #b0ada9;
  border-bottom: none;
  border-radius: 3px 3px 0 0;
  border-left: none;
}
.tabs .current {
  width: 72px;
  height: 29px;
  background: #fdfcfb;
  border-left: 1px solid #a5a29e;
}
.tab-page {
  flex: 1;
  min-width: 320px;
  margin-left: 2px;
  padding: 7px 5px;
  background: #fcf9f7;
  border: 1px solid #a5a29e;
  border-top-color: #b8b5b1;
}
.row {
  display: flex;
  align-items: center;
  margin-bottom: 7px;
}
.row label {
  width: 78px;
  flex: none;
}
.row .field, .row .select {
  flex: 1;
}
.type-row {
  margin-top: 11px;
}
.type-row label {
  width: 39px;
}
.type-row select {
  padding-left: 3px;
}
.lock-row {
  gap: 6px;
  margin: 10px 0 15px;
}
.lock-row label {
  width: auto;
  white-space: nowrap;
}
.unit-row .field {
  display: block;
  width: calc(100% - 2px);
  margin: 8px 0 12px 2px;
}
.range-title {
  margin-left: -2px;
}
.range-box {
  display: flex;
  align-items: center;
  height: 54px;
  margin: 3px 0 10px -1px;
  padding-left: 9px;
  border: 1px solid #dcd9d5;
  background: #faf7f4;
}
.range-box label {
  width: 69px;
}
.range-box .field {
  flex: 1;
}

.watermark {
  position: absolute;
  right: 48px;
  bottom: 41px;
  font-size: 57px;
  font-weight: 500;
  line-height: 80px;
  color: #fff;
  text-shadow: 3px 3px 1px rgba(100, 98, 94, 0.6);
}
```
